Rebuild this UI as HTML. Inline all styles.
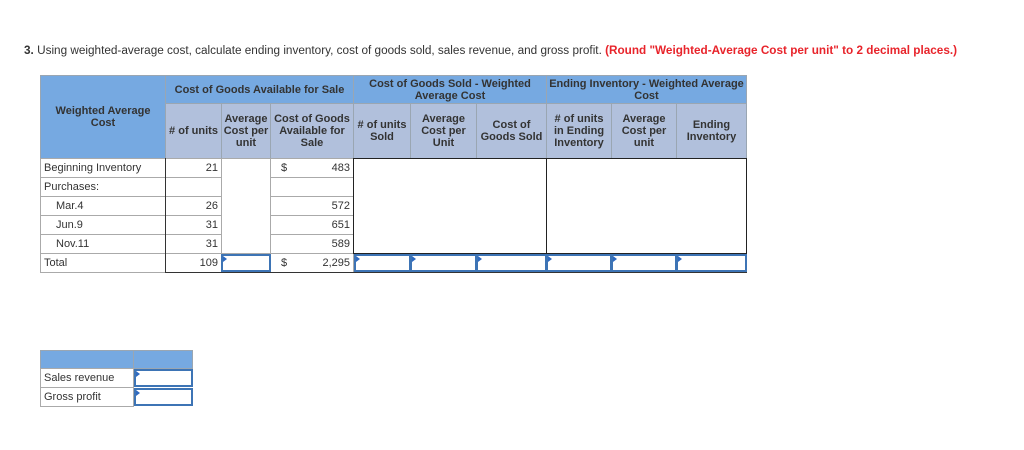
<!DOCTYPE html>
<html><head><style>
body{margin:0;width:1024px;height:450px;background:#fff;position:relative;overflow:hidden;font-family:"Liberation Sans",Arial,sans-serif;}
.c{position:absolute;box-sizing:border-box;font-size:11px;color:#222;line-height:12px;}
.h1{background:#76a9e1;border:1px solid #9aa6b2;display:flex;align-items:center;justify-content:center;text-align:center;font-weight:bold;color:#333;}
.h2{background:#b1c0dc;border:1px solid #9aa6b2;display:flex;align-items:center;justify-content:center;text-align:center;font-weight:bold;color:#333;}
.b{background:#fff;border:1px solid #aaa;padding:0 3px;display:flex;align-items:center;color:#333;}
.r{justify-content:flex-end;}
.in{background:#fff;border:2px solid #3d74b5;}
.in:before{content:"";position:absolute;left:0;top:0;border-left:4px solid #2f6ac0;border-top:3px solid transparent;border-bottom:3px solid transparent;}
.blk{position:absolute;border:1px solid #222;box-sizing:border-box;}
</style></head><body>
<div style="position:absolute;left:24px;top:44px;font-size:11.75px;color:#333;white-space:nowrap;"><b>3.</b> Using weighted-average cost, calculate ending inventory, cost of goods sold, sales revenue, and gross profit. <b style="color:#e8242b">(Round "Weighted-Average Cost per unit" to 2 decimal places.)</b></div>

<!-- headers -->
<div class="c h1" style="left:40px;top:75px;width:126px;height:84px;">Weighted Average<br>Cost</div>
<div class="c h1" style="left:165px;top:75px;width:189px;height:29px;">Cost of Goods Available for Sale</div>
<div class="c h1" style="left:353px;top:75px;width:194px;height:29px;">Cost of Goods Sold - Weighted<br>Average Cost</div>
<div class="c h1" style="left:546px;top:75px;width:201px;height:29px;">Ending Inventory - Weighted Average<br>Cost</div>

<div class="c h2" style="left:165px;top:103px;width:57px;height:56px;"># of units</div>
<div class="c h2" style="left:221px;top:103px;width:50px;height:56px;">Average<br>Cost per<br>unit</div>
<div class="c h2" style="left:270px;top:103px;width:84px;height:56px;">Cost of Goods<br>Available for<br>Sale</div>
<div class="c h2" style="left:353px;top:103px;width:58px;height:56px;"># of units<br>Sold</div>
<div class="c h2" style="left:410px;top:103px;width:67px;height:56px;">Average<br>Cost per<br>Unit</div>
<div class="c h2" style="left:476px;top:103px;width:71px;height:56px;">Cost of<br>Goods Sold</div>
<div class="c h2" style="left:546px;top:103px;width:66px;height:56px;"># of units<br>in Ending<br>Inventory</div>
<div class="c h2" style="left:611px;top:103px;width:66px;height:56px;">Average<br>Cost per<br>unit</div>
<div class="c h2" style="left:676px;top:103px;width:71px;height:56px;">Ending<br>Inventory</div>

<!-- body rows col0 -->
<div class="c b" style="left:40px;top:158px;width:126px;height:20px;">Beginning Inventory</div>
<div class="c b" style="left:40px;top:177px;width:126px;height:20px;">Purchases:</div>
<div class="c b" style="left:40px;top:196px;width:126px;height:20px;padding-left:15px;">Mar.4</div>
<div class="c b" style="left:40px;top:215px;width:126px;height:20px;padding-left:15px;">Jun.9</div>
<div class="c b" style="left:40px;top:234px;width:126px;height:20px;padding-left:15px;">Nov.11</div>
<div class="c b" style="left:40px;top:253px;width:126px;height:20px;">Total</div>
<!-- units -->
<div class="c b r" style="left:165px;top:158px;width:57px;height:20px;">21</div>
<div class="c b r" style="left:165px;top:177px;width:57px;height:20px;"></div>
<div class="c b r" style="left:165px;top:196px;width:57px;height:20px;">26</div>
<div class="c b r" style="left:165px;top:215px;width:57px;height:20px;">31</div>
<div class="c b r" style="left:165px;top:234px;width:57px;height:20px;">31</div>
<div class="c b r" style="left:165px;top:253px;width:57px;height:20px;">109</div>
<!-- avg merged -->
<div class="c b" style="left:221px;top:158px;width:50px;height:96px;"></div>
<!-- cogas -->
<div class="c b" style="left:270px;top:158px;width:84px;height:20px;justify-content:space-between;padding-left:10px;"><span>$</span><span>483</span></div>
<div class="c b" style="left:270px;top:177px;width:84px;height:20px;"></div>
<div class="c b r" style="left:270px;top:196px;width:84px;height:20px;">572</div>
<div class="c b r" style="left:270px;top:215px;width:84px;height:20px;">651</div>
<div class="c b r" style="left:270px;top:234px;width:84px;height:20px;">589</div>
<div class="c b" style="left:270px;top:253px;width:84px;height:20px;justify-content:space-between;padding-left:10px;"><span>$</span><span>2,295</span></div>
<!-- blank merged regions -->
<div class="blk" style="left:353px;top:158px;width:194px;height:96px;"></div>
<div class="blk" style="left:546px;top:158px;width:201px;height:96px;"></div>
<!-- total inputs -->
<div class="c in" style="left:221px;top:254px;width:50px;height:18px;"></div>
<div class="c in" style="left:354px;top:254px;width:57px;height:18px;"></div>
<div class="c in" style="left:410px;top:254px;width:67px;height:18px;"></div>
<div class="c in" style="left:476px;top:254px;width:71px;height:18px;"></div>
<div class="c in" style="left:546px;top:254px;width:66px;height:18px;"></div>
<div class="c in" style="left:611px;top:254px;width:66px;height:18px;"></div>
<div class="c in" style="left:676px;top:254px;width:71px;height:18px;"></div>
<div style="position:absolute;left:165px;top:272px;width:582px;height:1px;background:#333"></div>
<div style="position:absolute;left:165px;top:158px;width:1px;height:115px;background:#333"></div>

<!-- small table -->
<div class="c h1" style="left:40px;top:350px;width:94px;height:19px;"></div>
<div class="c h1" style="left:133px;top:350px;width:60px;height:19px;"></div>
<div class="c b" style="left:40px;top:368px;width:94px;height:20px;">Sales revenue</div>
<div class="c b" style="left:40px;top:387px;width:94px;height:20px;">Gross profit</div>
<div class="c in" style="left:134px;top:369px;width:59px;height:18px;"></div>
<div class="c in" style="left:134px;top:388px;width:59px;height:18px;"></div>
</body></html>
